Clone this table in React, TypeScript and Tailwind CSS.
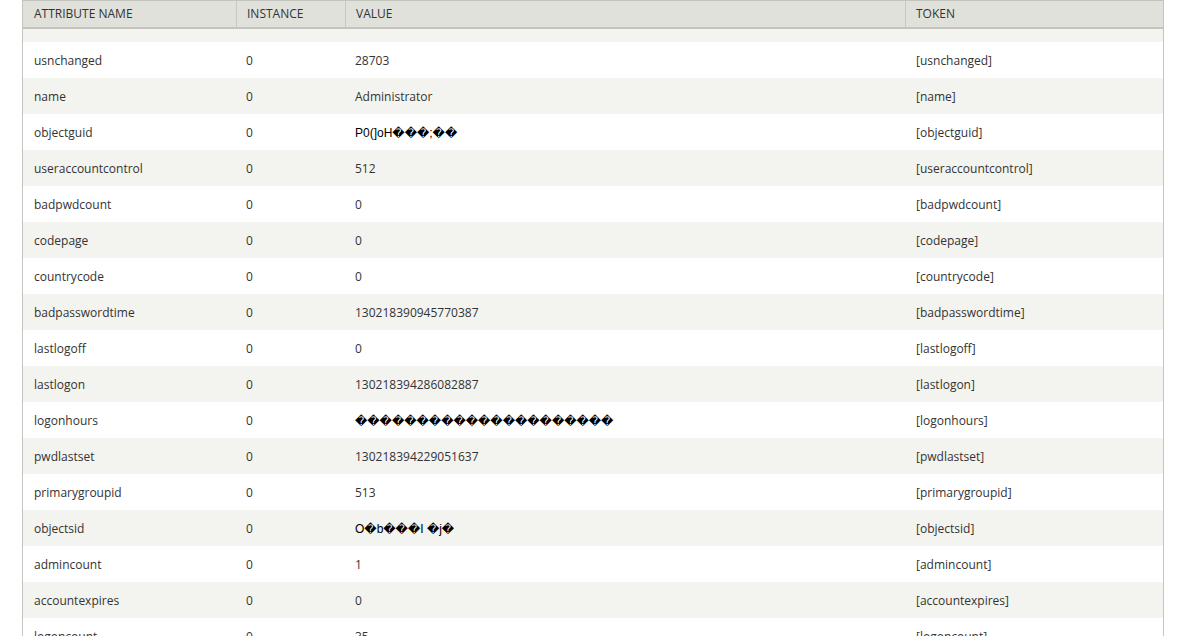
import React from 'react';

const R = '\uFFFD';

type Row = { name: string; instance: string; value: string; binary?: boolean };

const rows: Row[] = [
  { name: 'usnchanged', instance: '0', value: '28703' },
  { name: 'name', instance: '0', value: 'Administrator' },
  { name: 'objectguid', instance: '0', value: `P0(]oH${R}${R}${R};${R}${R}`, binary: true },
  { name: 'useraccountcontrol', instance: '0', value: '512' },
  { name: 'badpwdcount', instance: '0', value: '0' },
  { name: 'codepage', instance: '0', value: '0' },
  { name: 'countrycode', instance: '0', value: '0' },
  { name: 'badpasswordtime', instance: '0', value: '130218390945770387' },
  { name: 'lastlogoff', instance: '0', value: '0' },
  { name: 'lastlogon', instance: '0', value: '130218394286082887' },
  { name: 'logonhours', instance: '0', value: R.repeat(21), binary: true },
  { name: 'pwdlastset', instance: '0', value: '130218394229051637' },
  { name: 'primarygroupid', instance: '0', value: '513' },
  { name: 'objectsid', instance: '0', value: `O${R}b${R}${R}${R}I ${R}j${R}`, binary: true },
  { name: 'admincount', instance: '0', value: '1' },
  { name: 'accountexpires', instance: '0', value: '0' },
  { name: 'logoncount', instance: '0', value: '35' },
];

const cols = 'grid grid-cols-[213px_109px_560px_1fr]';

export default function App() {
  return (
    <div className="h-[636px] overflow-hidden bg-white font-['Open_Sans',sans-serif] text-[12px] text-[#333]">
      <div className="ml-[22px] w-[1142px] border-x border-[#c4c4c0]">
        {/* header */}
        <div className={`${cols} h-[29px] border-t border-b-2 border-[#c4c4bf] bg-[#e1e1dc] uppercase`}>
          <div className="flex items-center pl-[11px]">Attribute Name</div>
          <div className="flex items-center border-l border-[#c8c8c3] pl-[10px]">Instance</div>
          <div className="flex items-center border-l border-[#c8c8c3] pl-[10px]">Value</div>
          <div className="flex items-center border-l border-[#c8c8c3] pl-[10px]">Token</div>
        </div>

        {/* row scrolled under header */}
        <div className="h-[13px] bg-[#f3f3ef]" />

        {rows.map((row, i) => (
          <div
            key={row.name}
            className={`${cols} h-[36px] items-center pt-[2px] ${i % 2 === 0 ? 'bg-white' : 'bg-[#f3f3ef]'}`}
          >
            <div className="pl-[11px]">{row.name}</div>
            <div className="pl-[10px]">{row.instance}</div>
            <div className={`pl-[10px] ${row.binary ? "font-['Liberation_Sans','DejaVu_Sans',sans-serif] text-black" : ''}`}>
              {row.value}
            </div>
            <div className="pl-[11px]">[{row.name}]</div>
          </div>
        ))}
      </div>
    </div>
  );
}
